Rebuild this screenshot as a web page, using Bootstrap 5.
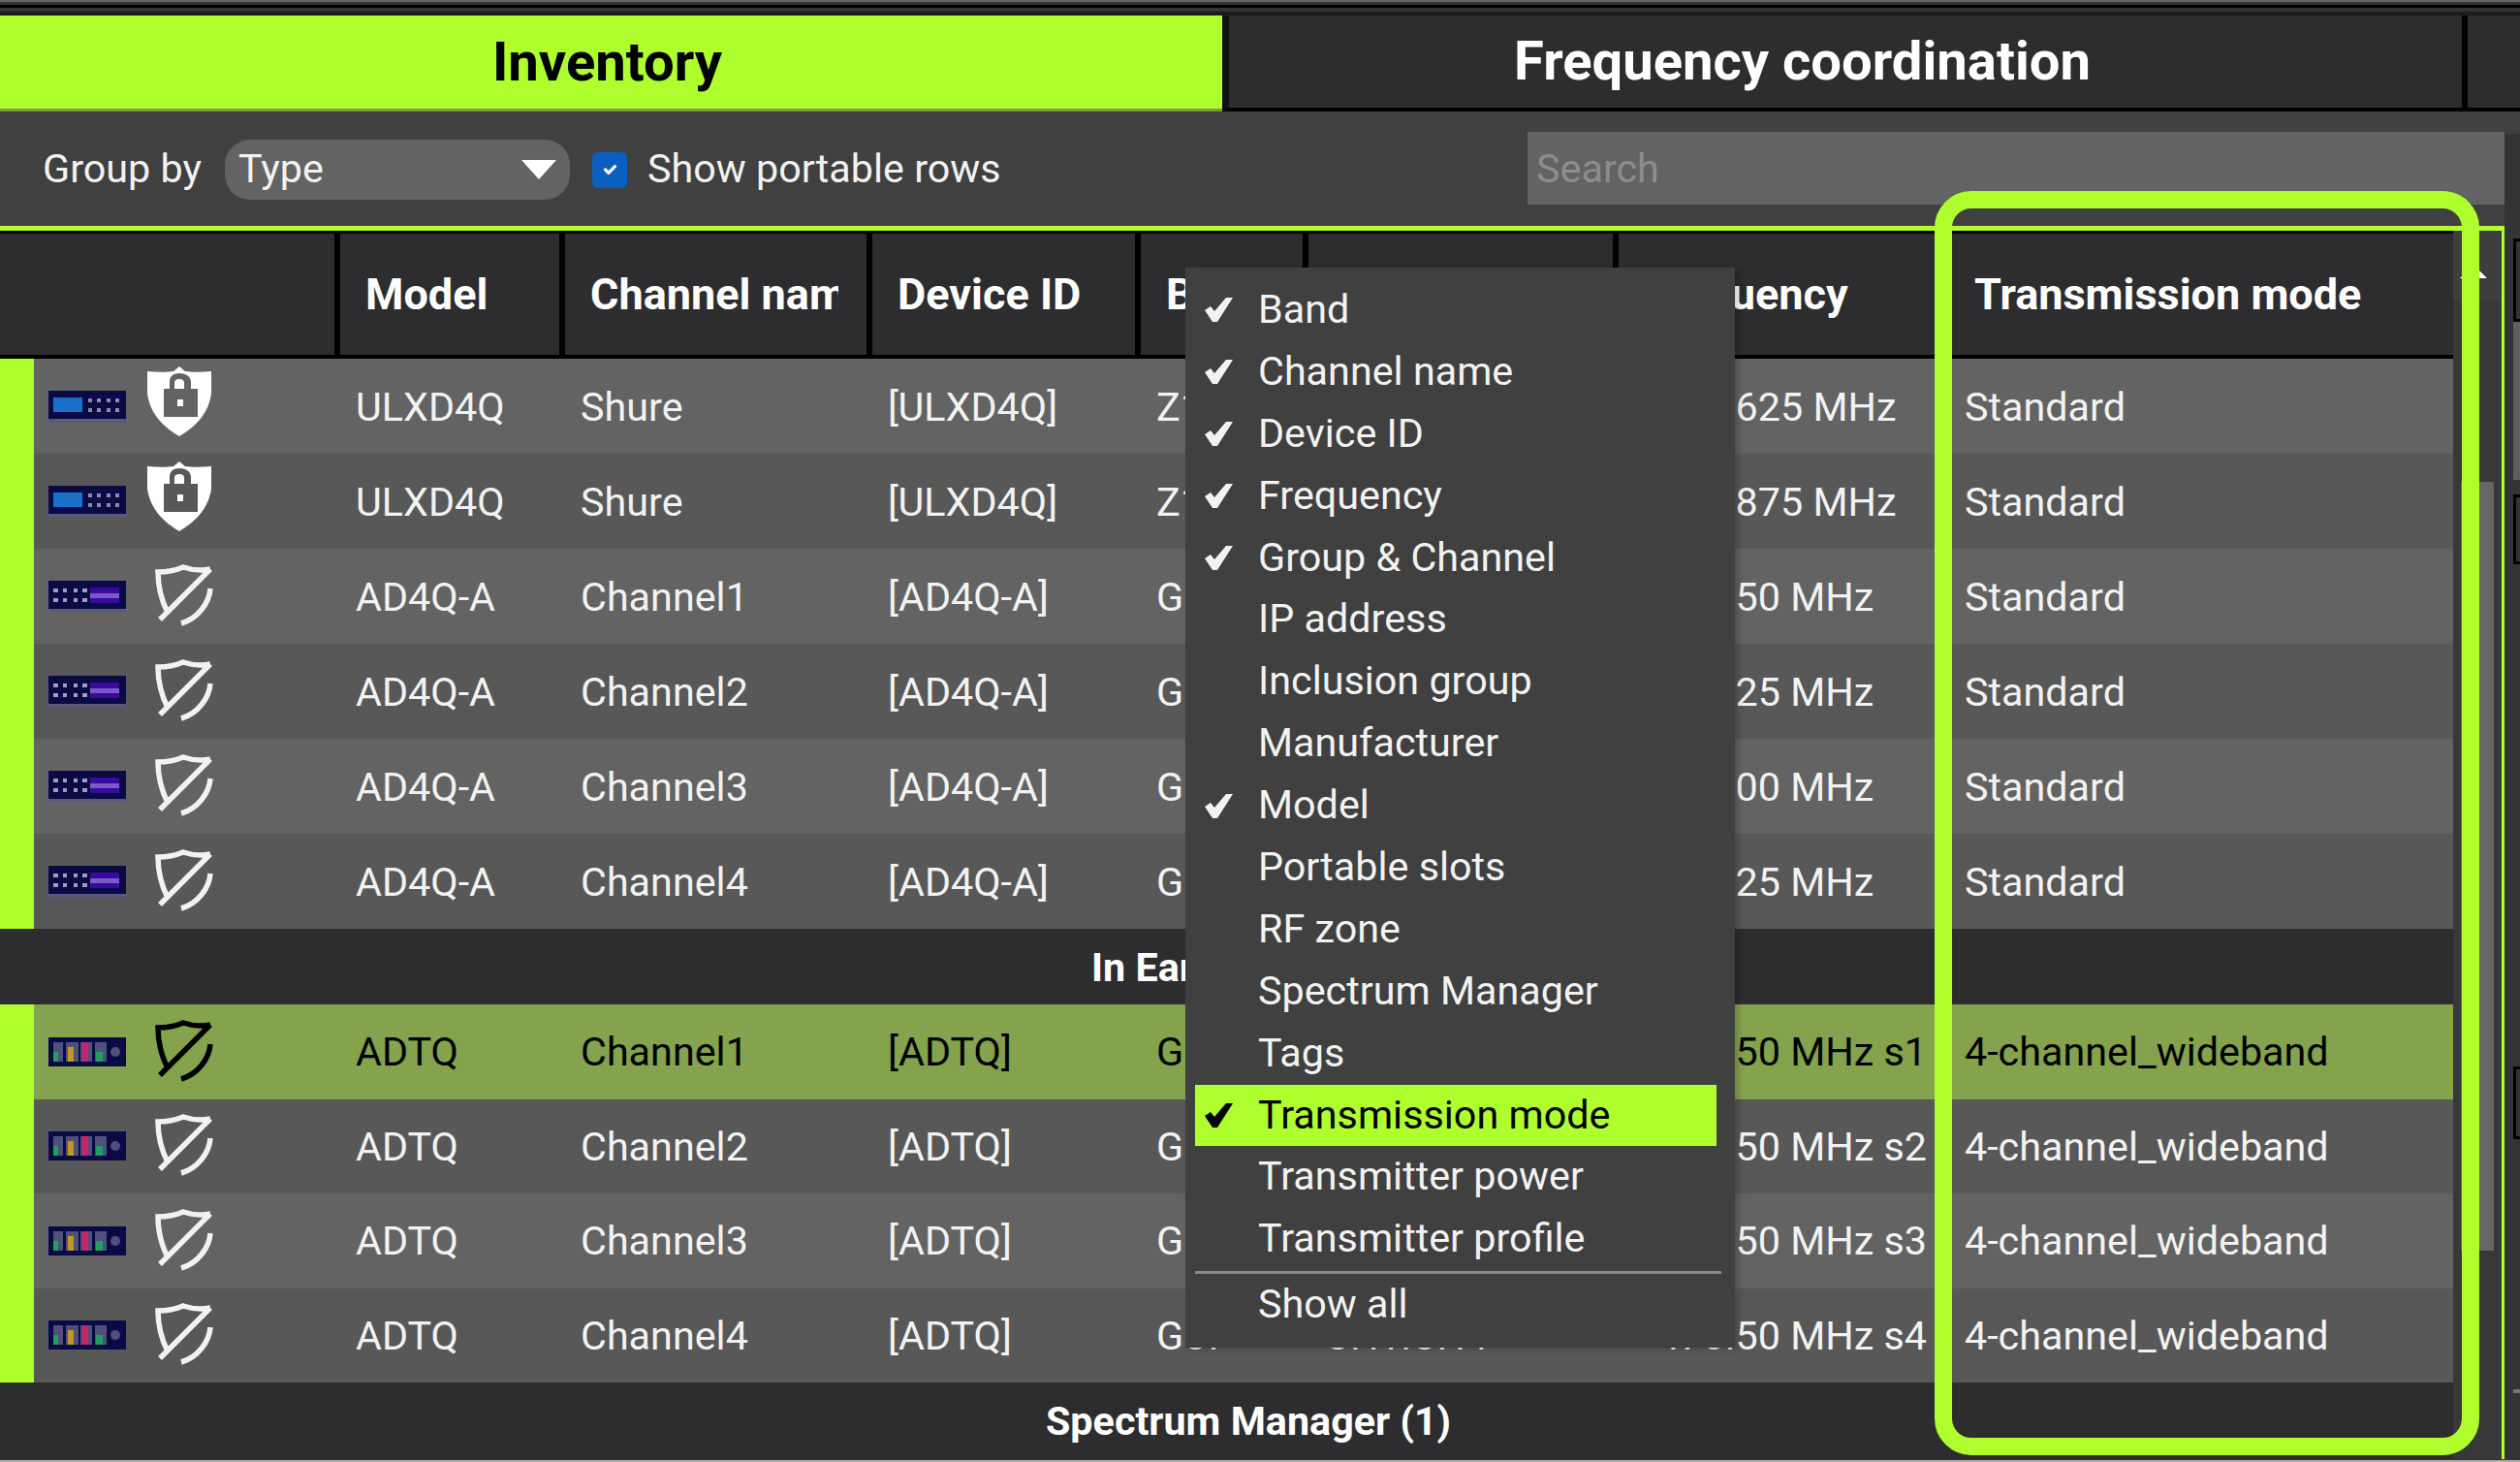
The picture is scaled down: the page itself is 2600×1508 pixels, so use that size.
<!DOCTYPE html>
<html lang="en">
<head>
    <meta charset="UTF-8">
    <title>Inventory</title>
    <link href="https://cdn.jsdelivr.net/npm/bootstrap@5.3.0/dist/css/bootstrap.min.css" rel="stylesheet">
    <style>
        :root { --lime: #afff2f; --panel: #404040; --hdr: #2d2d2f; }
        body { width: 2600px; height: 1508px; overflow: hidden; background: #343436; color: #f2f2f2; font-family: Roboto, "Liberation Sans", sans-serif; font-size: 41.3px; position: relative; }

        .top-strip { height: 16px; background: linear-gradient(#666 0 2px, #333 2px 5px, #000 5px 8px, #333 8px 12px, #1c1c1c 12px); }
        .tab-row { height: 99px; }
        .tab-item { font-size: 56.2px; font-weight: 700; border-bottom: 4px solid #000; background: var(--hdr); color: #fff; }
        .tab-item.is-on { width: 1261px; padding-right: 8px; background: var(--lime); color: #000; border-bottom: 3px solid #7e9f3a; border-right: 0; }
        .tab-freq { width: 1285px; padding-right: 89px; border-left: 7px solid #111; border-right: 6px solid #000; }

        .tool-bar { height: 123px; padding: 2px 0 0 44px; background: var(--panel); border-bottom: 5px solid var(--lime); }
        .combo-box { width: 356px; height: 62px; margin: -1px 0 0 24px; padding: 0 14px; background: #636363; border-radius: 26px; }
        .check-row { margin: 0 0 0 23px; padding: 0; min-height: 0; }
        .check-row .form-check-input { width: 36px; height: 37px; margin: 0 21px 0 0; float: none; background-color: #0a5fc0; border: 0; border-radius: 6px; background-size: 60%; }
        .search-box { width: 1008px; height: 75px; margin-left: auto; margin-top: -3px; padding: 0 9px; font-size: 41.3px; background: #636363; border: 0; border-radius: 0; }
        .search-box::placeholder { color: #8d8d8d; }

        .left-col { width: 2584px; }
        .right-gutter { flex: 1; border-top: 23px solid var(--panel); padding-left: 9px; }
        .gutter-block { border: 3px solid #000; border-right: 0; }
        .gb-1 { height: 86px; margin-top: 108px; }
        .gutter-fill { height: 163px; background: #5f5f5f; }
        .gb-2 { height: 72px; margin-top: 15px; }
        .gb-3 { height: 75px; margin-top: 518px; }
        .gutter-dot { height: 4px; margin-top: 258px; background: #777; }
        .table-wrap { border-right: 3px solid var(--lime); background: #383838; }

        .inv-table { --bs-table-bg: transparent; width: 2531px; margin: 0; table-layout: fixed; border-collapse: separate; border-spacing: 0; }
        .w-icons { width: 351px; }
        .w-model { width: 232px; }
        .w-name { width: 317px; }
        .w-device { width: 277px; }
        .w-band { width: 173px; }
        .w-group { width: 320px; }
        .w-freq { width: 341px; }
        .w-mode { width: 520px; }
        .inv-table th { height: 132px; padding: 0 0 0 26px; background: var(--hdr); color: #fff; font-size: 45px; font-weight: 700; border-width: 3px 6px 4px 0; border-style: solid; border-color: #000; vertical-align: middle; }
        .inv-table td { padding: 3px 0 0 16px; color: #f2f2f2; border: 0; vertical-align: middle; white-space: nowrap; overflow: hidden; }
        .inv-table th .head-text { overflow: hidden; white-space: nowrap; margin-right: 29px; }
        .row-lite { background: #636363; }
        .row-dark { background: #585858; }
        .row-sel { background: #85a24d; }
        .inv-table .row-sel td { color: #000; }
        .h-a { height: 98px; }
        .h-b { height: 97.5px; }
        .inv-table td.icon-cell { border-left: 35px solid var(--lime); padding: 0 0 0 15px; }
        .inv-table td.freq-cell { padding-left: 40px; }
        .inv-table tr.group-row td { height: 78px; background: var(--hdr); color: #fff; font-weight: 700; text-align: center; padding-left: 45px; }
        .inv-table tr.group-row.is-last td { height: 79px; }
        .shield-box { width: 68px; margin-left: 22px; }
        .shield-up { margin-bottom: 10px; }

        .scroll-lane { width: 50px; background: linear-gradient(#3e3e3e 72px, #383838 72px); }
        .scroll-arrow { width: 0; height: 0; margin: 35px 0 0 7px; border-left: 14px solid transparent; border-right: 14px solid transparent; border-bottom: 14px solid #fff; }
        .scroll-thumb { width: 34px; height: 793px; margin: 210px 0 0 8px; background: #666669; }

        .end-line { position: absolute; left: 0; right: 0; bottom: 0; height: 2px; background: #aaa; }
        .col-callout { position: absolute; left: 1996px; top: 197px; width: 562px; height: 1304px; border: 18px solid var(--lime); border-radius: 38px; pointer-events: none; }

        .col-menu { position: absolute; left: 1223px; top: 276px; width: 567px; height: 1114px; padding: 12px 19px 0 10px; margin: 0; background: var(--panel); border: 0; border-radius: 0; font-size: 41.3px; box-shadow: 4px 2px 6px rgba(0,0,0,.18); }
        .col-menu .dropdown-item { height: 63.9px; padding: 0; color: #f2f2f2; background: transparent; }
        .col-menu .dropdown-item.is-hot { background: var(--lime); color: #000; }
        .tick-box { width: 65px; padding-left: 10px; flex: none; }
        .col-menu .dropdown-divider { margin: 1px -5px 0 0; border-top: 3px solid #8a8a8a; opacity: 1; }
    </style>
</head>
<body>

<svg width="0" height="0" class="d-block">
    <symbol id="rack-ulx" viewBox="0 0 80 32">
        <rect width="80" height="29" fill="#0a0a45"/><rect y="29" width="80" height="3" fill="#5a5a80"/>
        <rect x="5" y="7" width="30" height="15" fill="#1a6fc8"/>
        <g fill="#8c87b0">
            <rect x="41" y="8" width="4" height="4"/><rect x="50" y="8" width="4" height="4"/><rect x="60" y="8" width="4" height="4"/><rect x="69" y="8" width="4" height="4"/>
            <rect x="41" y="18" width="4" height="4"/><rect x="50" y="18" width="4" height="4"/><rect x="60" y="18" width="4" height="4"/><rect x="69" y="18" width="4" height="4"/>
        </g>
    </symbol>
    <symbol id="rack-ad4" viewBox="0 0 80 32">
        <rect width="80" height="29" fill="#0a0a45"/><rect y="29" width="80" height="3" fill="#5a5a80"/>
        <rect x="43" y="7" width="30" height="16" fill="#3a0a9c"/><rect x="43" y="13" width="30" height="5" fill="#7a5ac8"/>
        <g fill="#a09cc0">
            <rect x="5" y="8" width="5" height="4"/><rect x="15" y="8" width="4" height="4"/><rect x="26" y="8" width="4" height="4"/><rect x="35" y="8" width="5" height="4"/>
            <rect x="5" y="18" width="5" height="4"/><rect x="15" y="18" width="4" height="4"/><rect x="26" y="18" width="4" height="4"/><rect x="35" y="18" width="5" height="4"/>
        </g>
    </symbol>
    <symbol id="rack-adt" viewBox="0 0 80 30">
        <rect width="80" height="30" fill="#0a0a45"/>
        <g fill="#50507a"><rect x="5" y="5" width="10" height="20"/><rect x="18" y="5" width="13" height="20"/><rect x="33" y="5" width="12" height="20"/><rect x="48" y="5" width="12" height="20"/><circle cx="69" cy="15" r="5"/></g>
        <rect x="5" y="15" width="5" height="10" fill="#20a060"/>
        <rect x="20" y="10" width="6" height="15" fill="#c09a20"/>
        <rect x="35" y="5" width="6" height="20" fill="#d0206a"/>
        <rect x="49" y="15" width="7" height="10" fill="#20a060"/>
    </symbol>
    <symbol id="shield-lock" viewBox="0 0 66 72">
        <path fill="currentColor" fill-rule="evenodd" d="M33 0 L39 5 C46 6 56 6 66 5 V28 C63 50 48 63 33 72 C18 63 3 50 0 28 V5 C10 6 20 6 27 5 Z
            M17 23 H23 V16 C23 10 27 7 33 7 C39 7 45 10 45 16 V23 H52 V52 H17 Z
            M28 23 H38 V17 C38 14 36 13 33 13 C30 13 28 14 28 17 Z
            M31 34 H37 V41 H31 Z"/>
    </symbol>
    <symbol id="shield-off" viewBox="0 0 60 66">
        <path fill="none" stroke="currentColor" stroke-width="5.5" d="M57 5 L5 57 M57 5 C48 7 38 6 29 3 C22 6 12 8 3 8 C3 22 6 36 13 50 M57 25 C56 40 44 56 27 61"/>
    </symbol>
    <symbol id="tick" viewBox="0 0 29 25">
        <polygon fill="currentColor" points="0,13 6,9 10,14 22,0 29,0 13,25 8,25"/>
    </symbol>
</svg>

<div class="top-strip"></div>

<div class="tab-row d-flex">
    <div class="tab-item is-on d-flex align-items-center justify-content-center">Inventory</div>
    <div class="tab-item tab-freq d-flex align-items-center justify-content-center">Frequency coordination</div>
    <div class="tab-item flex-grow-1"></div>
</div>

<div class="d-flex">
    <div class="left-col">
        <div class="tool-bar d-flex align-items-center">
            <span>Group by</span>
            <div class="combo-box d-flex align-items-center justify-content-between">
                <span>Type</span>
                <svg width="36" height="20" viewBox="0 0 36 20"><polygon points="0,0 36,0 18,20" fill="#fff"/></svg>
            </div>
            <div class="form-check check-row d-flex align-items-center">
                <input class="form-check-input" type="checkbox" id="showPortable" checked>
                <label class="form-check-label" for="showPortable">Show portable rows</label>
            </div>
            <input type="text" class="form-control search-box" placeholder="Search">
        </div>

        <div class="table-wrap d-flex">
            <table class="table inv-table">
                <colgroup>
                    <col class="w-icons"><col class="w-model"><col class="w-name"><col class="w-device">
                    <col class="w-band"><col class="w-group"><col class="w-freq"><col class="w-mode">
                </colgroup>
                <thead>
                    <tr>
                        <th></th>
                        <th><div class="head-text">Model</div></th>
                        <th><div class="head-text">Channel name</div></th>
                        <th><div class="head-text">Device ID</div></th>
                        <th><div class="head-text">Band</div></th>
                        <th><div class="head-text">Group &amp; Channel</div></th>
                        <th><div class="head-text">Frequency</div></th>
                        <th class="border-end-0"><div class="head-text">Transmission mode</div></th>
                    </tr>
                </thead>
                <tbody>
                    <tr class="row-lite h-a">
                        <td class="icon-cell"><div class="d-flex align-items-center"><svg width="80" height="32"><use href="#rack-ulx"/></svg><div class="shield-box shield-up d-flex"><svg width="66" height="72" class="text-white"><use href="#shield-lock"/></svg></div></div></td>
                        <td>ULXD4Q</td><td>Shure</td><td>[ULXD4Q]</td><td>Z16</td><td>CH1:CH1</td><td class="freq-cell">470.625 MHz</td><td>Standard</td>
                    </tr>
                    <tr class="row-dark h-a">
                        <td class="icon-cell"><div class="d-flex align-items-center"><svg width="80" height="32"><use href="#rack-ulx"/></svg><div class="shield-box shield-up d-flex"><svg width="66" height="72" class="text-white"><use href="#shield-lock"/></svg></div></div></td>
                        <td>ULXD4Q</td><td>Shure</td><td>[ULXD4Q]</td><td>Z16</td><td>CH1:CH2</td><td class="freq-cell">470.875 MHz</td><td>Standard</td>
                    </tr>
                    <tr class="row-lite h-a">
                        <td class="icon-cell"><div class="d-flex align-items-center"><svg width="80" height="32"><use href="#rack-ad4"/></svg><div class="shield-box d-flex justify-content-end"><svg width="60" height="66"><use href="#shield-off"/></svg></div></div></td>
                        <td>AD4Q-A</td><td>Channel1</td><td>[AD4Q-A]</td><td>G57</td><td>CH1:CH1</td><td class="freq-cell">470.50 MHz</td><td>Standard</td>
                    </tr>
                    <tr class="row-dark h-a">
                        <td class="icon-cell"><div class="d-flex align-items-center"><svg width="80" height="32"><use href="#rack-ad4"/></svg><div class="shield-box d-flex justify-content-end"><svg width="60" height="66"><use href="#shield-off"/></svg></div></div></td>
                        <td>AD4Q-A</td><td>Channel2</td><td>[AD4Q-A]</td><td>G57</td><td>CH1:CH2</td><td class="freq-cell">470.25 MHz</td><td>Standard</td>
                    </tr>
                    <tr class="row-lite h-a">
                        <td class="icon-cell"><div class="d-flex align-items-center"><svg width="80" height="32"><use href="#rack-ad4"/></svg><div class="shield-box d-flex justify-content-end"><svg width="60" height="66"><use href="#shield-off"/></svg></div></div></td>
                        <td>AD4Q-A</td><td>Channel3</td><td>[AD4Q-A]</td><td>G57</td><td>CH1:CH3</td><td class="freq-cell">471.00 MHz</td><td>Standard</td>
                    </tr>
                    <tr class="row-dark h-a">
                        <td class="icon-cell"><div class="d-flex align-items-center"><svg width="80" height="32"><use href="#rack-ad4"/></svg><div class="shield-box d-flex justify-content-end"><svg width="60" height="66"><use href="#shield-off"/></svg></div></div></td>
                        <td>AD4Q-A</td><td>Channel4</td><td>[AD4Q-A]</td><td>G57</td><td>CH1:CH4</td><td class="freq-cell">471.25 MHz</td><td>Standard</td>
                    </tr>
                    <tr class="group-row"><td colspan="8">In Ear monitor (4)</td></tr>
                    <tr class="row-sel h-b">
                        <td class="icon-cell"><div class="d-flex align-items-center"><svg width="80" height="30"><use href="#rack-adt"/></svg><div class="shield-box d-flex justify-content-end"><svg width="60" height="66"><use href="#shield-off"/></svg></div></div></td>
                        <td>ADTQ</td><td>Channel1</td><td>[ADTQ]</td><td>G57</td><td>CH1:CH1</td><td class="freq-cell">470.50 MHz s1</td><td>4-channel_wideband</td>
                    </tr>
                    <tr class="row-dark h-b">
                        <td class="icon-cell"><div class="d-flex align-items-center"><svg width="80" height="30"><use href="#rack-adt"/></svg><div class="shield-box d-flex justify-content-end"><svg width="60" height="66"><use href="#shield-off"/></svg></div></div></td>
                        <td>ADTQ</td><td>Channel2</td><td>[ADTQ]</td><td>G57</td><td>CH1:CH2</td><td class="freq-cell">470.50 MHz s2</td><td>4-channel_wideband</td>
                    </tr>
                    <tr class="row-lite h-b">
                        <td class="icon-cell"><div class="d-flex align-items-center"><svg width="80" height="30"><use href="#rack-adt"/></svg><div class="shield-box d-flex justify-content-end"><svg width="60" height="66"><use href="#shield-off"/></svg></div></div></td>
                        <td>ADTQ</td><td>Channel3</td><td>[ADTQ]</td><td>G57</td><td>CH1:CH3</td><td class="freq-cell">470.50 MHz s3</td><td>4-channel_wideband</td>
                    </tr>
                    <tr class="row-dark h-b">
                        <td class="icon-cell"><div class="d-flex align-items-center"><svg width="80" height="30"><use href="#rack-adt"/></svg><div class="shield-box d-flex justify-content-end"><svg width="60" height="66"><use href="#shield-off"/></svg></div></div></td>
                        <td>ADTQ</td><td>Channel4</td><td>[ADTQ]</td><td>G57</td><td>CH1:CH4</td><td class="freq-cell">470.50 MHz s4</td><td>4-channel_wideband</td>
                    </tr>
                    <tr class="group-row is-last"><td colspan="8">Spectrum Manager (1)</td></tr>
                </tbody>
            </table>
            <div class="scroll-lane">
                <div class="scroll-arrow"></div>
                <div class="scroll-thumb"></div>
            </div>
        </div>
    </div>
    <div class="right-gutter">
        <div class="gutter-block gb-1"></div>
        <div class="gutter-fill"></div>
        <div class="gutter-block gb-2"></div>
        <div class="gutter-block gb-3"></div>
        <div class="gutter-dot"></div>
    </div>
</div>

<div class="end-line"></div>
<div class="col-callout"></div>

<!-- Column chooser -->
<ul class="dropdown-menu show col-menu list-unstyled">
    <li><div class="dropdown-item d-flex align-items-center"><span class="tick-box d-flex"><svg width="29" height="25"><use href="#tick"/></svg></span>Band</div></li>
    <li><div class="dropdown-item d-flex align-items-center"><span class="tick-box d-flex"><svg width="29" height="25"><use href="#tick"/></svg></span>Channel name</div></li>
    <li><div class="dropdown-item d-flex align-items-center"><span class="tick-box d-flex"><svg width="29" height="25"><use href="#tick"/></svg></span>Device ID</div></li>
    <li><div class="dropdown-item d-flex align-items-center"><span class="tick-box d-flex"><svg width="29" height="25"><use href="#tick"/></svg></span>Frequency</div></li>
    <li><div class="dropdown-item d-flex align-items-center"><span class="tick-box d-flex"><svg width="29" height="25"><use href="#tick"/></svg></span>Group &amp; Channel</div></li>
    <li><div class="dropdown-item d-flex align-items-center"><span class="tick-box"></span>IP address</div></li>
    <li><div class="dropdown-item d-flex align-items-center"><span class="tick-box"></span>Inclusion group</div></li>
    <li><div class="dropdown-item d-flex align-items-center"><span class="tick-box"></span>Manufacturer</div></li>
    <li><div class="dropdown-item d-flex align-items-center"><span class="tick-box d-flex"><svg width="29" height="25"><use href="#tick"/></svg></span>Model</div></li>
    <li><div class="dropdown-item d-flex align-items-center"><span class="tick-box"></span>Portable slots</div></li>
    <li><div class="dropdown-item d-flex align-items-center"><span class="tick-box"></span>RF zone</div></li>
    <li><div class="dropdown-item d-flex align-items-center"><span class="tick-box"></span>Spectrum Manager</div></li>
    <li><div class="dropdown-item d-flex align-items-center"><span class="tick-box"></span>Tags</div></li>
    <li><div class="dropdown-item is-hot d-flex align-items-center"><span class="tick-box d-flex"><svg width="29" height="25"><use href="#tick"/></svg></span>Transmission mode</div></li>
    <li><div class="dropdown-item d-flex align-items-center"><span class="tick-box"></span>Transmitter power</div></li>
    <li><div class="dropdown-item d-flex align-items-center"><span class="tick-box"></span>Transmitter profile</div></li>
    <li><hr class="dropdown-divider"></li>
    <li><div class="dropdown-item d-flex align-items-center"><span class="tick-box"></span>Show all</div></li>
</ul>

<script src="https://cdn.jsdelivr.net/npm/bootstrap@5.3.0/dist/js/bootstrap.bundle.min.js"></script>
</body>
</html>
